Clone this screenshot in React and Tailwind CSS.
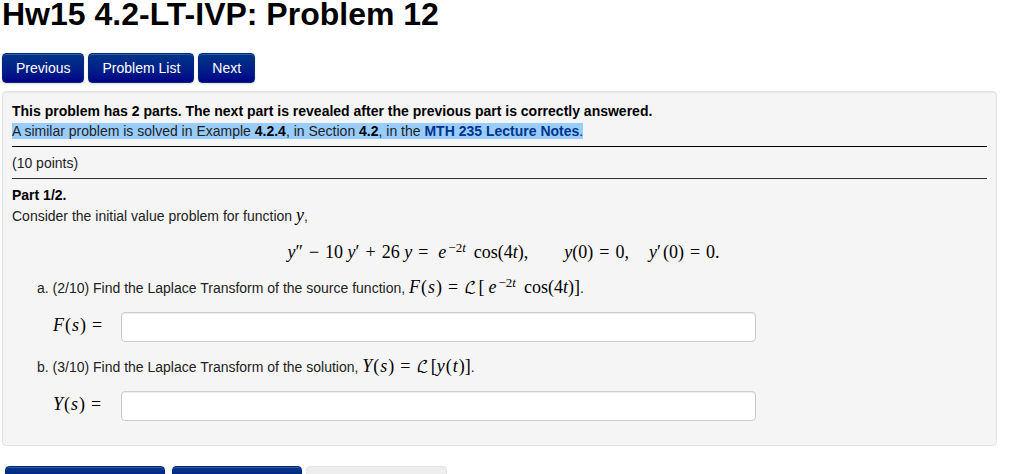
const navButton =
  "h-[30px] rounded border border-[#00287a] bg-linear-to-b from-[#003388] to-[#000088] text-sm leading-5 text-white shadow-[inset_0_1px_0_rgba(255,255,255,0.2),0_1px_2px_rgba(0,0,0,0.15)]";

function M({ children }) {
  return (
    <span className="font-['Liberation_Serif',serif] text-lg leading-5 text-black">
      {children}
    </span>
  );
}

function Op({ children }) {
  return <span className="mx-1.5">{children}</span>;
}

function Arg({ children }) {
  return (
    <span className="ml-px">
      (<span className="mx-px">{children}</span>)
    </span>
  );
}

function ExpTerm() {
  return (
    <>
      <i>e</i>
      <sup className="ml-0.5 text-[13px] leading-none">
        −2<i>t</i>
      </sup>
      <span className="ml-2">
        cos(4<i>t</i>)
      </span>
    </>
  );
}

function ScriptL() {
  return (
    <span className="mr-0.5 font-['DejaVu_Math_TeX_Gyre','DejaVu_Serif','DejaVu_Sans',serif] text-base leading-5">
      ℒ
    </span>
  );
}

function Answer({ id, name }) {
  return (
    <div className="flex items-center pl-4">
      <label htmlFor={id} className="w-[68px] shrink-0 pb-1">
        <M>
          <i>{name}</i>
          <Arg><i>s</i></Arg>
          <Op>=</Op>
        </M>
      </label>
      <input
        id={id}
        type="text"
        className="h-[30px] w-[68%] rounded border border-[#cccccc] bg-white px-2 text-sm shadow-[inset_0_1px_1px_rgba(0,0,0,0.075)] outline-none"
      />
    </div>
  );
}

export default function App() {
  return (
    <main className="h-screen overflow-hidden bg-white pl-0.5 pr-[27px] font-['Liberation_Sans',Arial,sans-serif] text-sm leading-5 text-[#222222]">
      <h1 className="text-[32px] font-bold leading-7 text-black">Hw15 4.2-LT-IVP: Problem 12</h1>
      <nav className="mt-[25px] flex gap-1">
        <button type="button" className={`${navButton} px-[13px]`}>Previous</button>
        <button type="button" className={`${navButton} px-[13px]`}>Problem List</button>
        <button type="button" className={`${navButton} px-[13px]`}>Next</button>
      </nav>

      <section className="mt-2 rounded border border-[#e3e3e3] bg-[#f5f5f5] px-[9px] pb-6 pt-[9px] shadow-[inset_0_1px_1px_rgba(0,0,0,0.05)]">
        <p className="font-bold text-black">
          This problem has 2 parts. The next part is revealed after the previous part is correctly answered.
        </p>
        <p>
          <span className="bg-[#99ccff]">
            A similar problem is solved in Example <b className="text-black">4.2.4</b>, in Section{" "}
            <b className="text-black">4.2</b>, in the{" "}
            <a href="#notes" className="font-bold text-[#003388]">MTH 235 Lecture Notes</a>.
          </span>
        </p>
        <hr className="mt-[5px] border-black" />
        <p className="mb-[5px] mt-1.5">(10 points)</p>
        <hr className="border-[#333333]" />
        <p className="mt-1.5 font-bold text-black">Part 1/2.</p>
        <p>
          Consider the initial value problem for function <M><i>y</i></M>,
        </p>

        <div className="mt-4 flex justify-center pl-2">
          <M>
            <i>y</i>″<Op>−</Op>10 <i>y</i>′<Op>+</Op>26 <i>y</i><Op>=</Op>
            <span className="ml-1"><ExpTerm />,</span>
            <span className="ml-9"><i>y</i>(0)<Op>=</Op>0,</span>
            <span className="ml-5"><i>y</i>′<span className="ml-0.5">(0)</span><Op>=</Op>0.</span>
          </M>
        </div>

        <ol className="mt-[15px] pl-[25px]">
          <li>
            <p className="mb-3.5">
              a. (2/10) Find the Laplace Transform of the source function,{" "}
              <M>
                <i>F</i>
                <Arg><i>s</i></Arg>
                <Op>=</Op>
                <ScriptL />[<span className="ml-1"><ExpTerm /></span>]
              </M>
              .
            </p>
            <Answer id="answer-f" name="F" />
          </li>
          <li className="mt-3.5">
            <p className="mb-3.5">
              b. (3/10) Find the Laplace Transform of the solution,{" "}
              <M>
                <i>Y</i>
                <Arg><i>s</i></Arg>
                <Op>=</Op>
                <ScriptL />[<i>y</i>
                <Arg><i>t</i></Arg>]
              </M>
              .
            </p>
            <Answer id="answer-y" name="Y" />
          </li>
        </ol>
      </section>

      <div className="mt-5 flex gap-[7px] pl-[3px]">
        <button type="button" aria-label="Preview My Answers" className={`${navButton} w-40`} />
        <div className="flex gap-1">
          <button type="button" aria-label="Submit Answers" className={`${navButton} w-[130px]`} />
          <button
            type="button"
            disabled
            aria-label="Show Answers"
            className="h-[30px] w-[141px] rounded border border-[#e3e3e3] bg-[#eeeeee]"
          />
        </div>
      </div>
    </main>
  );
}
